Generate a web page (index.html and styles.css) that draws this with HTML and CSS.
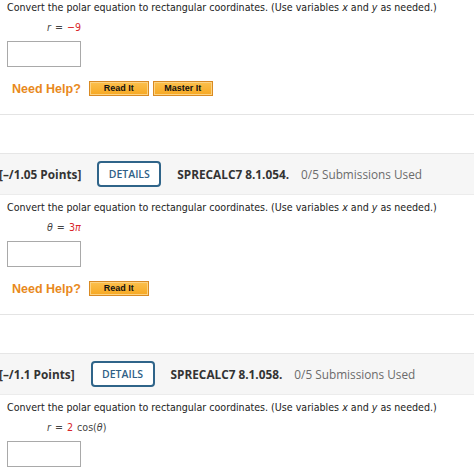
FILE: index.html
```html
<!DOCTYPE html>
<html>
<head>
<meta charset="utf-8">
<link rel="stylesheet" href="styles.css">
</head>
<body>
<div class="question">
  <div class="prompt">Convert the polar equation to rectangular coordinates. (Use variables <i>x</i> and <i>y</i> as needed.)</div>
  <div class="eq"><i>r</i> = <span class="red">&minus;9</span></div>
  <div class="answer"></div>
  <div class="help">
    <span class="help-label">Need Help?</span>
    <span class="hbtn">Read It</span>
    <span class="hbtn">Master It</span>
  </div>
</div>
<div class="sep"></div>

<div class="header">
  <span class="points">[&ndash;/1.05 Points]</span>
  <span class="details">DETAILS</span>
  <span class="code">SPRECALC7 8.1.054.</span>
  <span class="subs">0/5 Submissions Used</span>
</div>
<div class="question">
  <div class="prompt">Convert the polar equation to rectangular coordinates. (Use variables <i>x</i> and <i>y</i> as needed.)</div>
  <div class="eq"><i>&theta;</i> = <span class="red">3<i>&pi;</i></span></div>
  <div class="answer"></div>
  <div class="help">
    <span class="help-label">Need Help?</span>
    <span class="hbtn">Read It</span>
  </div>
</div>
<div class="sep"></div>

<div class="header">
  <span class="points">[&ndash;/1.1 Points]</span>
  <span class="details">DETAILS</span>
  <span class="code">SPRECALC7 8.1.058.</span>
  <span class="subs">0/5 Submissions Used</span>
</div>
<div class="question">
  <div class="prompt">Convert the polar equation to rectangular coordinates. (Use variables <i>x</i> and <i>y</i> as needed.)</div>
  <div class="eq"><i>r</i> = <span class="red">2</span> cos(<i>&theta;</i>)</div>
  <div class="answer"></div>
</div>
</body>
</html>
```
FILE: styles.css
```css
html, body {
  margin: 0;
  padding: 0;
  background: #ffffff;
}
body {
  font-family: "DejaVu Sans Condensed", "DejaVu Sans", Verdana, sans-serif;
  color: #222;
  overflow: hidden;
}
.question {
  padding-left: 7px;
}
.prompt {
  font-size: 10.6px;
  line-height: 14px;
  color: #222;
  white-space: nowrap;
}
.header + .question .prompt {
  margin-top: 5px;
}
.eq {
  font-size: 10.6px;
  line-height: 14px;
  margin-top: 6px;
  padding-left: 40px;
  color: #444;
  word-spacing: 1px;
}
.red {
  color: #d8262b;
}
.answer {
  width: 72px;
  height: 24px;
  border: 1px solid #a9a9a9;
  margin-top: 7px;
  background: #fff;
}
.help {
  display: flex;
  align-items: center;
  margin-top: 14px;
  height: 15px;
  padding-left: 5px;
}
.help-label {
  font-family: "Liberation Sans", Arial, sans-serif;
  font-weight: bold;
  font-size: 12.5px;
  color: #e8891c;
  margin-right: 8px;
}
.hbtn {
  box-sizing: border-box;
  width: 60px;
  height: 15px;
  margin-right: 4px;
  border: 1px solid #d98a22;
  background: linear-gradient(#fbc04d, #f7a822);
  box-shadow: inset 0 0 0 1px #fcd383;
  font-family: "Liberation Sans", Arial, sans-serif;
  font-weight: bold;
  font-size: 9px;
  line-height: 13px;
  text-align: center;
  color: #111;
}
.sep {
  margin-top: 18px;
  border-top: 1px solid #e4e4e4;
  margin-bottom: 38px;
}
.header {
  display: flex;
  align-items: center;
  height: 40px;
  background: #f6f6f6;
  border-top: 1px solid #e6e6e6;
  border-bottom: 1px solid #ececec;
  font-family: "Open Sans", sans-serif;
  font-size: 11.8px;
  color: #333;
  white-space: nowrap;
}
.points {
  font-weight: bold;
  margin-left: -1px;
  margin-right: 16px;
}
.details {
  box-sizing: border-box;
  width: 64px;
  height: 26px;
  border: 2px solid #2f6489;
  border-radius: 4px;
  background: #fff;
  color: #2f5f86;
  font-size: 10.5px;
  font-weight: 600;
  display: flex;
  align-items: center;
  justify-content: center;
  margin-right: 16px;
}
.code {
  font-weight: bold;
  color: #333;
  margin-right: 12px;
}
.subs {
  color: #6b6b6b;
}
```
